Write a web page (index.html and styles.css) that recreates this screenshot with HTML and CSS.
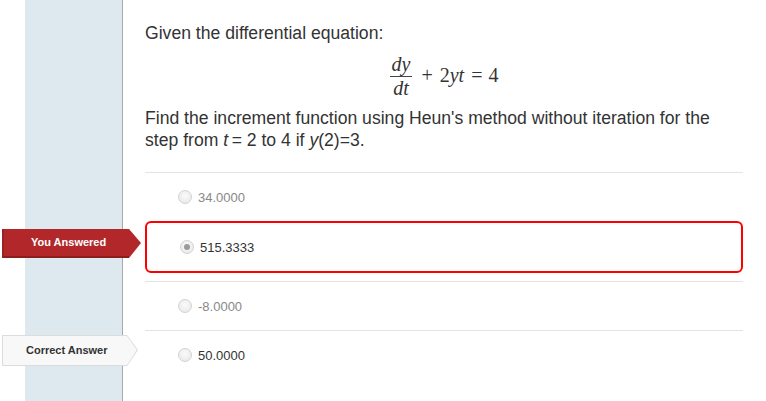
FILE: index.html
```html
<!DOCTYPE html>
<html>
<head>
<meta charset="utf-8">
<link rel="stylesheet" href="styles.css">
</head>
<body>
<div class="page">
  <div class="gutter"></div>
  <div class="sidebar"></div>
  <div class="main">
    <p class="q">Given the differential equation:</p>
    <div class="eq">
      <span class="frac"><span class="num">dy</span><span class="den">dt</span></span>
      <span class="op plus">+</span><span class="n">2</span><i class="v">yt</i><span class="op eqs">=</span><span class="n">4</span>
    </div>
    <p class="q">Find the increment function using Heun's method without iteration for the step from <i>t</i>&#8201;= 2 to 4 if <i>y</i>(2)=3.</p>
    <div class="answers">
      <div class="row">
        <span class="radio"></span><span class="val dim">34.0000</span>
      </div>
      <div class="row answered">
        <div class="badge you">You Answered</div>
        <span class="radio checked"></span><span class="val">515.3333</span>
      </div>
      <div class="row">
        <span class="radio"></span><span class="val dim">-8.0000</span>
      </div>
      <div class="row">
        <div class="badge correct">Correct Answer</div>
        <span class="radio"></span><span class="val">50.0000</span>
      </div>
    </div>
  </div>
</div>
</body>
</html>
```
FILE: styles.css
```css
html, body {
  margin: 0;
  padding: 0;
  background: #fff;
}
body {
  font-family: "Liberation Sans", Arial, sans-serif;
  color: #333;
}
.page {
  display: flex;
  width: 766px;
  height: 401px;
  overflow: hidden;
}
.gutter {
  width: 25px;
  flex: none;
}
.sidebar {
  width: 97px;
  flex: none;
  background: #dee8ef;
  border-right: 1px solid #a9a9a9;
}
.main {
  width: 598px;
  flex: none;
  padding: 22px 0 0 22px;
}
.q {
  margin: 0;
  font-size: 17.6px;
  line-height: 22px;
}
.eq {
  display: flex;
  justify-content: center;
  align-items: center;
  height: 63px;
  font-family: "Liberation Serif", "Times New Roman", serif;
  font-size: 20px;
  color: #333;
}
.frac {
  display: inline-flex;
  flex-direction: column;
  align-items: center;
  font-style: italic;
  margin-top: 1px;
}
.num {
  line-height: 17px;
  padding: 0 2px 3px;
  border-bottom: 1px solid #444;
}
.den {
  line-height: 17px;
  padding: 3px 2px 0;
}
.op {
  display: inline-block;
}
.plus {
  margin: 0 7px 0 9px;
}
.eqs {
  margin: 0 6px 0 7px;
}
.v {
  font-style: italic;
}
.answers {
  margin-top: 21px;
}
.row {
  position: relative;
  display: flex;
  align-items: center;
  height: 48px;
  padding-left: 33px;
  border-top: 1px solid #e4e4e4;
  font-size: 13px;
}
.row.answered {
  border: 2px solid #f00;
  border-radius: 6px;
  margin-bottom: 8px;
}
.radio {
  width: 12px;
  height: 12px;
  border-radius: 50%;
  border: 1px solid #d2d2d2;
  background: radial-gradient(circle at 50% 40%, #fafafa 0%, #ececec 70%, #e2e2e2 100%);
  margin-right: 6px;
  flex: none;
  position: relative;
}
.radio.checked::after {
  content: "";
  position: absolute;
  left: 3px;
  top: 3px;
  width: 6px;
  height: 6px;
  border-radius: 50%;
  background: #9a9a9a;
}
.val {
  color: #333;
}
.val.dim {
  color: #888;
}
.badge {
  position: absolute;
  height: 29px;
  font-size: 11px;
  font-weight: bold;
  box-sizing: border-box;
}
.badge.you {
  left: -145px;
  top: 6px;
  width: 127px;
  background: #b2282a;
  color: #fff;
  border-bottom: 2px solid #8e1d1e;
  border-left: 2px solid #9a2223;
  padding-left: 27px;
  line-height: 27px;
}
.badge.you::after {
  content: "";
  position: absolute;
  right: -12px;
  top: 0;
  width: 0;
  height: 0;
  border-style: solid;
  border-width: 14px 0 15px 12px;
  border-color: transparent transparent transparent #b2282a;
}
.badge.correct {
  left: -143px;
  top: 4px;
  width: 125px;
  height: 31px;
  line-height: 29px;
  background: #f8f8f8;
  border: 1px solid #dcdcdc;
  border-right: none;
  color: #333;
  padding-left: 23px;
}
.badge.correct::before,
.badge.correct::after {
  content: "";
  position: absolute;
  width: 0;
  height: 0;
  border-style: solid;
}
.badge.correct::before {
  right: -11px;
  top: -1px;
  border-width: 15px 0 16px 11px;
  border-color: transparent transparent transparent #d6d6d6;
}
.badge.correct::after {
  right: -10px;
  top: 0;
  border-width: 14px 0 15px 10px;
  border-color: transparent transparent transparent #f8f8f8;
}
```
